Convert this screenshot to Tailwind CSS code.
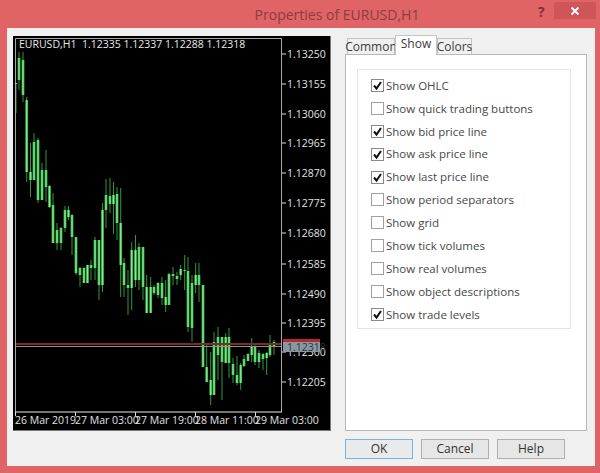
<!DOCTYPE html>
<html lang="en">
<head>
  <meta charset="UTF-8" />
  <meta name="viewport" content="width=device-width, initial-scale=1.0" />
  <title>Properties of EURUSD,H1</title>
  <script src="https://cdn.jsdelivr.net/npm/@tailwindcss/browser@4"></script>
</head>
<body class="bg-[#e06365] font-['Open_Sans',sans-serif] overflow-hidden">
  <div class="w-[600px] h-[473px] flex flex-col">

    <!-- title bar -->
    <div class="relative h-[28px] shrink-0 flex items-center justify-center pl-[74px] text-[14px] text-[#8c3c42]">
      Properties of EURUSD,H1
      <span class="absolute left-[538px] top-[1px] text-[14px] font-bold text-[#7e3038]">?</span>
      <div class="absolute left-[554px] top-[2px] w-[42px] h-[17px] bg-[#cf5658] flex items-center justify-center">
        <svg width="10" height="10" viewBox="0 0 10 10"><path d="M1.5 1.5 8.5 8.5M8.5 1.5 1.5 8.5" stroke="#fff" stroke-width="2"/></svg>
      </div>
    </div>

    <!-- client area -->
    <div class="ml-[7px] w-[588px] h-[438px] bg-[#f0f0f0] pl-[6px] pt-[8px] flex flex-col">
      <div class="flex gap-[14px] h-[395px]">

        <div class="w-[318px] h-[395px] bg-black shrink-0 border-b border-r border-[#777]">
          <svg id="chart" width="318" height="395" viewBox="13 36 318 395" class="block"></svg>
        </div>

        <div class="w-[242px] flex flex-col -mt-px h-[396px]">
          <div class="flex items-end h-[19px] pl-[2px] text-[12px] text-[#3c3c3c]">
            <div class="w-[48px] h-[16px] bg-[#f0f0f0] border border-b-0 border-[#c4c4c4] flex items-center justify-center">Common</div>
            <div class="w-[42px] h-[20px] -mb-px z-10 bg-white border border-b-0 border-[#c4c4c4] flex items-start justify-center leading-[16px]">Show</div>
            <div class="w-[35px] h-[16px] bg-[#f0f0f0] border border-b-0 border-[#c4c4c4] flex items-center justify-center">Colors</div>
          </div>
          <div class="flex-1 bg-white border border-[#b9b9b9] pl-[11px] pt-[14px]">
            <ul id="options" class="w-[214px] h-[260px] border border-[#e4e4e4] pl-[13px] pt-[4px] flex flex-col text-[11.5px] text-[#474747]">
              <li class="h-[22.9px] flex items-center gap-[2px]">
                <span class="w-[13px] h-[13px] border border-[#8a8a8a] bg-white flex items-center justify-center"><svg width="11" height="11" viewBox="0 0 11 11"><path d="M2 5.5 4.5 8.5 9 2" fill="none" stroke="#111" stroke-width="2"/></svg></span>
                Show OHLC
              </li>
              <li class="h-[22.9px] flex items-center gap-[2px]">
                <span class="w-[13px] h-[13px] border border-[#a0a0a0] bg-white"></span>
                Show quick trading buttons
              </li>
              <li class="h-[22.9px] flex items-center gap-[2px]">
                <span class="w-[13px] h-[13px] border border-[#8a8a8a] bg-white flex items-center justify-center"><svg width="11" height="11" viewBox="0 0 11 11"><path d="M2 5.5 4.5 8.5 9 2" fill="none" stroke="#111" stroke-width="2"/></svg></span>
                Show bid price line
              </li>
              <li class="h-[22.9px] flex items-center gap-[2px]">
                <span class="w-[13px] h-[13px] border border-[#8a8a8a] bg-white flex items-center justify-center"><svg width="11" height="11" viewBox="0 0 11 11"><path d="M2 5.5 4.5 8.5 9 2" fill="none" stroke="#111" stroke-width="2"/></svg></span>
                Show ask price line
              </li>
              <li class="h-[22.9px] flex items-center gap-[2px]">
                <span class="w-[13px] h-[13px] border border-[#8a8a8a] bg-white flex items-center justify-center"><svg width="11" height="11" viewBox="0 0 11 11"><path d="M2 5.5 4.5 8.5 9 2" fill="none" stroke="#111" stroke-width="2"/></svg></span>
                Show last price line
              </li>
              <li class="h-[22.9px] flex items-center gap-[2px]">
                <span class="w-[13px] h-[13px] border border-[#a0a0a0] bg-white"></span>
                Show period separators
              </li>
              <li class="h-[22.9px] flex items-center gap-[2px]">
                <span class="w-[13px] h-[13px] border border-[#a0a0a0] bg-white"></span>
                Show grid
              </li>
              <li class="h-[22.9px] flex items-center gap-[2px]">
                <span class="w-[13px] h-[13px] border border-[#a0a0a0] bg-white"></span>
                Show tick volumes
              </li>
              <li class="h-[22.9px] flex items-center gap-[2px]">
                <span class="w-[13px] h-[13px] border border-[#a0a0a0] bg-white"></span>
                Show real volumes
              </li>
              <li class="h-[22.9px] flex items-center gap-[2px]">
                <span class="w-[13px] h-[13px] border border-[#a0a0a0] bg-white"></span>
                Show object descriptions
              </li>
              <li class="h-[22.9px] flex items-center gap-[2px]">
                <span class="w-[13px] h-[13px] border border-[#8a8a8a] bg-white flex items-center justify-center"><svg width="11" height="11" viewBox="0 0 11 11"><path d="M2 5.5 4.5 8.5 9 2" fill="none" stroke="#111" stroke-width="2"/></svg></span>
                Show trade levels
              </li>
            </ul>
          </div>
        </div>
      </div>

      <!-- buttons -->
      <div class="flex gap-[8px] pl-[332px] mt-[8px] text-[12px] text-[#333]">
        <button class="w-[68px] h-[20px] bg-[#e8eaec] border border-[#7eb4d9] leading-none">OK</button>
        <button class="w-[68px] h-[20px] bg-[#e6e6e6] border border-[#b0b0b0] leading-none">Cancel</button>
        <button class="w-[68px] h-[20px] bg-[#e6e6e6] border border-[#b0b0b0] leading-none">Help</button>
      </div>
    </div>
  </div>

  <script>
  // x, high, body top, body bottom, low (page pixels read off the chart)
  const candles = [
    [16,83,83,84,113],[19,52,58,80,90],[23,52,60,95,102],[26.7,97,100,172,182],
    [30.5,143,172,180,197],[34,133,142,180,180],[38,138,140,200,203],[42,163,170,200,200],
    [46,150,170,187,202],[49.5,185,186,207,208],[53,193,205,243,243],[57,223,230,243,250],
    [61,227,228,243,250],[65,206,210,228,232],[68.5,206,210,217,220],[72,214,215,237,255],
    [76,237,237,273,275],[80,267,268,275,287],[84,267,268,283,283],[87.5,265,265,283,283],
    [91,260,265,268,280],[95,237,240,268,280],[99,240,240,285,300],[102.5,203,210,285,292],
    [106,179,195,210,228],[110,178,196,204,213],[113.5,182,195,204,234],[117,187,194,223,240],
    [120.7,188,223,265,297],[124,258,263,285,297],[128,270,285,288,315],[131.7,242,250,288,310],
    [135.5,235,250,280,287],[139,243,247,280,290],[143,247,247,287,300],[146.7,275,287,313,313],
    [150.7,277,287,313,313],[154,285,287,293,295],[158,282,283,295,298],[162,277,283,298,305],
    [165.7,280,297,305,312],[169,273,274,305,305],[173,267,274,276,285],[177,272,276,279,285],
    [180.7,265,269,275,280],[184.7,255,270,271,290],[188,257,271,327,332],[192,275,283,328,342],
    [195.7,263,275,285,293],[199,263,275,285,302],[203,285,285,367,367],[206.7,343,367,382,382],
    [210.7,352,380,395,405],[214,332,342,395,395],[218,327,337,355,380],[222,337,337,362,400],
    [225.7,333,337,363,363],[229,328,337,363,378],[233,358,364,375,383],[237,356,375,383,385],
    [240.7,363,365,383,390],[244,355,359,366,367],[248,353,354,361,361],[251.7,338,347,355,362],
    [255,345,347,362,365],[259,350,353,362,368],[263,353,354,359,370],[266.7,352,353,358,375],
    [270,335,343,355,357],[274,340,342,347,355]
  ];
  const prices = [
    ['1.13250',54],['1.13155',84],['1.13060',114],['1.12965',143],['1.12870',173],['1.12775',203],
    ['1.12680',233],['1.12585',264],['1.12490',294],['1.12395',323],['1.12300',352],['1.12205',382]
  ];
  const dates = [['26 Mar 2019',15],['27 Mar 03:00',75],['27 Mar 19:00',135],['28 Mar 11:00',195],['29 Mar 03:00',255]];

  let svg = '';
  candles.forEach(c => {
    svg += `<rect x="${c[0] - 0.5}" y="${c[1]}" width="1" height="${c[4] - c[1]}" fill="#2e9a3c"/>`;
    svg += `<rect x="${c[0] - 1.4}" y="${c[2]}" width="2.8" height="${c[3] - c[2]}" fill="#36b048"/>`;
    svg += `<rect x="${c[0] - 0.6}" y="${c[2]}" width="1.2" height="${c[3] - c[2]}" fill="#8cec90"/>`;
  });

  // price lines and frame
  svg += '<rect x="15" y="343" width="266" height="2" fill="#7a2b2b"/>';
  svg += '<rect x="15" y="346" width="266" height="1" fill="#8f8f8f"/>';
  svg += '<path d="M15.5 412V38.5H281.5V412" fill="none" stroke="#a8a8a8"/>';
  svg += '<rect x="15" y="411.5" width="267" height="1" fill="#e8e8e8"/>';

  const font = 'font-family="Open Sans, sans-serif" font-size="10.5"';
  prices.forEach(p => {
    svg += `<rect x="282" y="${p[1] - 0.5}" width="4" height="1" fill="#ddd"/>`;
    svg += `<text x="287" y="${p[1] + 4}" ${font} fill="#e0e0e0">${p[0]}</text>`;
  });
  dates.forEach(d => {
    svg += `<rect x="${d[1]}" y="412" width="1" height="4" fill="#ddd"/>`;
    svg += `<text x="${d[1]}" y="424" ${font} fill="#e0e0e0">${d[0]}</text>`;
  });

  // current price tag sits over the 1.12300 label
  svg += '<rect x="283" y="339" width="37" height="3" fill="#b52a2a"/>';
  svg += '<rect x="283" y="342" width="37" height="10" fill="#8a97a3"/>';
  svg += `<text x="287" y="351" ${font} fill="#2c3640">1.12318</text>`;

  svg += `<text x="19" y="48" ${font} fill="#e8e8e8" xml:space="preserve">EURUSD,H1  1.12335 1.12337 1.12288 1.12318</text>`;

  document.getElementById('chart').innerHTML = svg;
  </script>
</body>
</html>
